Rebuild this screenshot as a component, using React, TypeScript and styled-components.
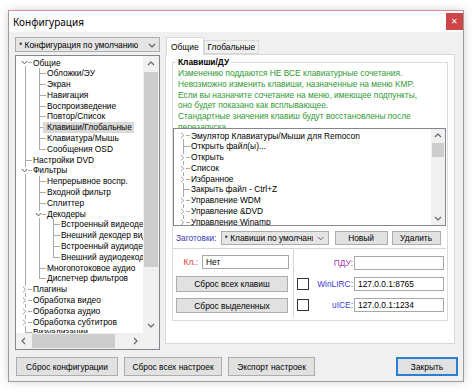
import React from 'react';
import styled, { createGlobalStyle } from 'styled-components';

type Chevron = 'open' | 'closed';

interface TreeItem {
  label: string;
  // one char per indent cell: ' ' empty, '|' pipe, 'T' tee, 'L' last, 'F' first root
  guides: string;
  chevron?: Chevron;
  selected?: boolean;
}

const LINE = '#ababab';
const ROW = 10.8;

const settingsTree: TreeItem[] = [
  { label: 'Общие', guides: 'F', chevron: 'open' },
  { label: 'Обложки/ЭУ', guides: '|T' },
  { label: 'Экран', guides: '|T' },
  { label: 'Навигация', guides: '|T' },
  { label: 'Воспроизведение', guides: '|T' },
  { label: 'Повтор/Список', guides: '|T' },
  { label: 'Клавиши/Глобальные', guides: '|T', selected: true },
  { label: 'Клавиатура/Мышь', guides: '|T' },
  { label: 'Сообщения OSD', guides: '|L' },
  { label: 'Настройки DVD', guides: 'T' },
  { label: 'Фильтры', guides: 'T', chevron: 'open' },
  { label: 'Непрерывное воспр.', guides: '|T' },
  { label: 'Входной фильтр', guides: '|T' },
  { label: 'Сплиттер', guides: '|T' },
  { label: 'Декодеры', guides: '|T', chevron: 'open' },
  { label: 'Встроенный видеодекодер', guides: '||T' },
  { label: 'Внешний декодер видео', guides: '||T' },
  { label: 'Встроенный аудиодекодер', guides: '||T' },
  { label: 'Внешний аудиодекодер', guides: '||L' },
  { label: 'Многопотоковое аудио', guides: '|T' },
  { label: 'Диспетчер фильтров', guides: '|L' },
  { label: 'Плагины', guides: 'T', chevron: 'closed' },
  { label: 'Обработка видео', guides: 'T', chevron: 'closed' },
  { label: 'Обработка аудио', guides: 'T', chevron: 'closed' },
  { label: 'Обработка субтитров', guides: 'T', chevron: 'closed' },
  { label: 'Визуализации', guides: 'T' },
];

const hotkeys: TreeItem[] = [
  { label: 'Эмулятор Клавиатуры/Мыши для Remocon', guides: 'F', chevron: 'closed' },
  { label: 'Открыть файл(ы)...', guides: 'T' },
  { label: 'Открыть', guides: 'T', chevron: 'closed' },
  { label: 'Список', guides: 'T', chevron: 'closed' },
  { label: 'Избранное', guides: 'T', chevron: 'closed' },
  { label: 'Закрыть файл - Ctrl+Z', guides: 'T' },
  { label: 'Управление WDM', guides: 'T', chevron: 'closed' },
  { label: 'Управление &DVD', guides: 'T', chevron: 'closed' },
  { label: 'Управление Winamp', guides: 'T', chevron: 'closed' },
];

const notice = [
  'Изменению поддаются НЕ ВСЕ клавиатурные сочетания.',
  'Невозможно изменить клавиши, назначенные на меню KMP.',
  'Если вы назначите сочетание на меню, имеющее подпункты,',
  'оно будет показано как всплывающее.',
  'Стандартные значения клавиш будут восстановлены после',
  'перезапуска.',
];

const guideBg = (g: string) => {
  const v = (y: string, h: string) => `linear-gradient(${LINE}, ${LINE}) 7px ${y} / 1px ${h} no-repeat`;
  const hz = `linear-gradient(${LINE}, ${LINE}) 7px 50% / 7px 1px no-repeat`;
  switch (g) {
    case '|':
      return v('0', '100%');
    case 'T':
      return `${hz}, ${v('0', '100%')}`;
    case 'L':
      return `${hz}, ${v('0', '50%')}`;
    case 'F':
      return `${hz}, ${v('100%', '50%')}`;
    default:
      return 'none';
  }
};

const Arrow: React.FC<{ dir: 'up' | 'down' | 'left' | 'right' }> = ({ dir }) => {
  const pts = {
    up: '1,5 4,2 7,5',
    down: '1,3 4,6 7,3',
    left: '5,1 2,4 5,7',
    right: '3,1 6,4 3,7',
  }[dir];
  return (
    <svg width="8" height="8" viewBox="0 0 8 8">
      <polyline points={pts} fill="none" stroke="#606060" strokeWidth="1.1" />
    </svg>
  );
};

const TreeRows: React.FC<{ items: TreeItem[] }> = ({ items }) => (
  <>
    {items.map((item) => (
      <TreeRow key={item.label}>
        {item.guides.split('').map((g, i) => (
          <GuideCell key={i} $guide={g}>
            {item.chevron && i === item.guides.length - 1 && (
              <ChevronIcon width="7" height="7" viewBox="0 0 7 7">
                <polyline
                  points={item.chevron === 'open' ? '0.8,2 3.5,4.8 6.2,2' : '2,0.8 4.8,3.5 2,6.2'}
                  fill="none"
                  stroke={item.chevron === 'open' ? '#505050' : '#9a9a9a'}
                  strokeWidth="1"
                />
              </ChevronIcon>
            )}
          </GuideCell>
        ))}
        <TreeLabel $selected={item.selected}>{item.label}</TreeLabel>
      </TreeRow>
    ))}
  </>
);

const VScrollbar: React.FC<{ size: number; thumb: number }> = ({ size, thumb }) => (
  <VTrack>
    <ArrowBox $size={size}>
      <Arrow dir="up" />
    </ArrowBox>
    <VThumb $height={thumb} />
    <Spacer />
    <ArrowBox $size={size}>
      <Arrow dir="down" />
    </ArrowBox>
  </VTrack>
);

const App: React.FC = () => (
  <>
    <GlobalStyle />
    <Page>
      <Window>
        <TitleBar>
          <Title>Конфигурация</Title>
          <CloseButton>✕</CloseButton>
        </TitleBar>
        <Body>
          <Main>
            <LeftColumn>
              <Combo $width={145}>
                <ComboText>* Конфигурация по умолчанию</ComboText>
                <Arrow dir="down" />
              </Combo>
              <Tree>
                <TreeContent>
                  <TreeRows items={settingsTree} />
                </TreeContent>
                <VScrollbar size={16} thumb={195} />
                <HTrack>
                  <ArrowBox $size={16}>
                    <Arrow dir="left" />
                  </ArrowBox>
                  <HThumb $width={83} />
                  <Spacer />
                  <ArrowBox $size={16}>
                    <Arrow dir="right" />
                  </ArrowBox>
                </HTrack>
                <Corner />
              </Tree>
            </LeftColumn>
            <RightColumn>
              <Tabs>
                <Tab $active>Общие</Tab>
                <Tab>Глобальные</Tab>
              </Tabs>
              <Panel>
                <Group>
                  <Legend>Клавиши/ДУ</Legend>
                  <Notice>
                    {notice.map((line) => (
                      <div key={line}>{line}</div>
                    ))}
                  </Notice>
                  <HotkeyList>
                    <TreeContent>
                      <TreeRows items={hotkeys} />
                    </TreeContent>
                    <VScrollbar size={14} thumb={14} />
                  </HotkeyList>
                  <PresetRow>
                    <FieldLabel $color="#3a3ab4">Заготовки:</FieldLabel>
                    <Combo $width={108}>
                      <ComboText>* Клавиши по умолчанию</ComboText>
                      <Arrow dir="down" />
                    </Combo>
                    <Button $width={53} $height={14}>
                      Новый
                    </Button>
                    <Button $width={49} $height={14}>
                      Удалить
                    </Button>
                  </PresetRow>
                  <Separator />
                  <KeyArea>
                    <KeyPane>
                      <KeyRow>
                        <KeyLabel>Кл.:</KeyLabel>
                        <TextBox $width={87}>Нет</TextBox>
                      </KeyRow>
                      <Button $width={112} $height={16}>
                        Сброс всех клавиш
                      </Button>
                      <Button $width={112} $height={15}>
                        Сброс выделенных
                      </Button>
                    </KeyPane>
                    <Divider />
                    <RemotePane>
                      <RemoteRow>
                        <CheckSlot />
                        <RemoteLabel $color="#a23cb0">ПДУ:</RemoteLabel>
                        <TextBox $width={90} />
                      </RemoteRow>
                      <RemoteRow>
                        <CheckSlot>
                          <CheckBox />
                        </CheckSlot>
                        <RemoteLabel $color="#3d3dd6">WinLIRC:</RemoteLabel>
                        <TextBox $width={90}>127.0.0.1:8765</TextBox>
                      </RemoteRow>
                      <RemoteRow>
                        <CheckSlot>
                          <CheckBox />
                        </CheckSlot>
                        <RemoteLabel $color="#3d3dd6">uICE:</RemoteLabel>
                        <TextBox $width={90}>127.0.0.1:1234</TextBox>
                      </RemoteRow>
                    </RemotePane>
                  </KeyArea>
                </Group>
              </Panel>
            </RightColumn>
          </Main>
          <Footer>
            <Button $width={102} $height={19}>
              Сброс конфигурации
            </Button>
            <Button $width={98} $height={19}>
              Сброс всех настроек
            </Button>
            <Button $width={87} $height={19}>
              Экспорт настроек
            </Button>
            <Button $width={62} $height={19} $primary>
              Закрыть
            </Button>
          </Footer>
        </Body>
      </Window>
    </Page>
  </>
);

export default App;

const GlobalStyle = createGlobalStyle`
  * {
    box-sizing: border-box;
  }
  html,
  body {
    margin: 0;
    padding: 0;
    background: #ffffff;
  }
  body {
    font-family: 'Liberation Sans', Arial, sans-serif;
    font-size: 8.4px;
    color: #000;
  }
`;
const Page = styled.div`
  width: 474px;
  height: 392px;
  padding: 10px 0 0 8px;
`;
const Window = styled.div`
  display: flex;
  flex-direction: column;
  width: 456px;
  height: 372px;
  border: 1px solid #9c9c9c;
  border-top-color: #d98b98;
  background: #f0f0f0;
  box-shadow: 0 0 9px rgba(0, 0, 0, 0.18);
`;
const TitleBar = styled.div`
  display: flex;
  align-items: flex-start;
  justify-content: space-between;
  height: 21px;
  padding-left: 4px;
  background: #ffffff;
`;
const Title = styled.span`
  font-family: 'Noto Sans', 'Liberation Sans', sans-serif;
  font-size: 10px;
  line-height: 23px;
`;
const CloseButton = styled.div`
  display: flex;
  align-items: center;
  justify-content: center;
  width: 17px;
  height: 17px;
  margin-top: 2px;
  font-size: 8px;
  color: #fff;
  background: #cf4646;
`;
const Body = styled.div`
  display: flex;
  flex-direction: column;
  gap: 7px;
  flex: 1;
  padding: 5px 5px 5px 6px;
`;
const Main = styled.div`
  display: flex;
  gap: 5px;
  height: 313px;
`;
const LeftColumn = styled.div`
  display: flex;
  flex-direction: column;
  gap: 3px;
  width: 145px;
`;
const Combo = styled.div<{ $width: number }>`
  display: flex;
  align-items: center;
  justify-content: space-between;
  gap: 4px;
  width: ${({ $width }) => $width}px;
  height: 15px;
  padding: 0 3px;
  border: 1px solid #acacac;
  background: #e5e5e5;
  flex-shrink: 0;
`;
const ComboText = styled.span`
  overflow: hidden;
  white-space: nowrap;
`;
const Tree = styled.div`
  display: grid;
  grid-template-columns: 1fr 16px;
  grid-template-rows: 1fr 16px;
  flex: 1;
  min-height: 0;
  border: 1px solid #828790;
  background: #fff;
`;
const TreeContent = styled.div`
  overflow: hidden;
  padding: 1.5px 0 0 2px;
  min-width: 0;
  min-height: 0;
`;
const TreeRow = styled.div`
  display: flex;
  align-items: center;
  height: ${ROW}px;
  white-space: nowrap;
`;
const GuideCell = styled.span<{ $guide: string }>`
  display: flex;
  align-items: center;
  justify-content: center;
  flex-shrink: 0;
  width: 14px;
  height: 100%;
  padding-right: 1px;
  background: ${({ $guide }) => guideBg($guide)};
`;
const ChevronIcon = styled.svg`
  background: #fff;
`;
const TreeLabel = styled.span<{ $selected?: boolean }>`
  line-height: ${ROW}px;
  padding: ${({ $selected }) => ($selected ? '0 2px 0 4px' : '0 1px')};
  margin-left: ${({ $selected }) => ($selected ? '-3px' : '0')};
  background: ${({ $selected }) => ($selected ? '#d9d9d9' : 'transparent')};
`;
const VTrack = styled.div`
  display: flex;
  flex-direction: column;
  background: #f0f0f0;
`;
const HTrack = styled.div`
  display: flex;
  background: #f0f0f0;
`;
const ArrowBox = styled.div<{ $size: number }>`
  display: flex;
  align-items: center;
  justify-content: center;
  flex-shrink: 0;
  width: ${({ $size }) => $size}px;
  height: ${({ $size }) => $size}px;
`;
const VThumb = styled.div<{ $height: number }>`
  height: ${({ $height }) => $height}px;
  margin: 0 1px;
  background: #cdcdcd;
`;
const HThumb = styled.div<{ $width: number }>`
  width: ${({ $width }) => $width}px;
  margin: 1px 0;
  background: #cdcdcd;
`;
const Spacer = styled.div`
  flex: 1;
`;
const Corner = styled.div`
  background: #f0f0f0;
`;
const RightColumn = styled.div`
  display: flex;
  flex-direction: column;
  width: 290px;
  height: 307px;
`;
const Tabs = styled.div`
  display: flex;
  align-items: flex-end;
  height: 17px;
  padding-left: 1px;
`;
const Tab = styled.div<{ $active?: boolean }>`
  position: relative;
  display: flex;
  align-items: center;
  height: ${({ $active }) => ($active ? '18px' : '14px')};
  margin-bottom: ${({ $active }) => ($active ? '-1px' : '0')};
  padding: 0 ${({ $active }) => ($active ? '4px' : '3px')};
  border: 1px solid #d9d9d9;
  border-bottom: ${({ $active }) => ($active ? 'none' : '1px solid #d9d9d9')};
  background: ${({ $active }) => ($active ? '#fff' : '#f0f0f0')};
  z-index: ${({ $active }) => ($active ? 1 : 0)};
`;
const Panel = styled.div`
  flex: 1;
  padding: 2px 6px 0 6px;
  border: 1px solid #d9d9d9;
  background: #fff;
`;
const Group = styled.fieldset`
  display: flex;
  flex-direction: column;
  height: 264px;
  margin: 0;
  padding: 0 1px 0 0;
  border: 1px solid #dcdcdc;
`;
const Legend = styled.legend`
  margin-left: 3px;
  padding: 0 2px;
  font-weight: bold;
  line-height: 11px;
`;
const Notice = styled.div`
  height: 60px;
  overflow: hidden;
  padding-left: 5px;
  line-height: ${ROW}px;
  white-space: nowrap;
  color: #2f9a33;
  flex-shrink: 0;
`;
const HotkeyList = styled.div`
  display: grid;
  grid-template-columns: 1fr 14px;
  height: 98px;
  border: 1px solid #828790;
  background: #fff;
  flex-shrink: 0;
`;
const PresetRow = styled.div`
  display: flex;
  align-items: center;
  gap: 4px;
  height: 14px;
  margin-top: 5px;
  padding-left: 3px;
  & > ${Combo} {
    height: 14px;
    margin-right: 2px;
  }
`;
const FieldLabel = styled.span<{ $color: string }>`
  color: ${({ $color }) => $color};
  white-space: nowrap;
`;
const Button = styled.div<{ $width: number; $height: number; $primary?: boolean }>`
  display: flex;
  align-items: center;
  justify-content: center;
  flex-shrink: 0;
  width: ${({ $width }) => $width}px;
  height: ${({ $height }) => $height}px;
  border: 1px solid ${({ $primary }) => ($primary ? '#2a7fd4' : '#adadad')};
  box-shadow: ${({ $primary }) => ($primary ? 'inset 0 0 0 1px #2a7fd4' : 'none')};
  background: #e1e1e1;
  white-space: nowrap;
`;
const Separator = styled.div`
  height: 1px;
  margin-top: 3px;
  background: #d5d5d5;
`;
const KeyArea = styled.div`
  display: flex;
  height: 68px;
`;
const KeyPane = styled.div`
  display: flex;
  flex-direction: column;
  align-items: flex-start;
  gap: 6px;
  flex: 0 0 120px;
  padding: 6px 0 0 3px;
`;
const KeyRow = styled.div`
  display: grid;
  grid-template-columns: 26px 87px;
  align-items: center;
  gap: 0;
  width: 113px;
  margin-bottom: 1px;
`;
const KeyLabel = styled.span`
  padding-right: 4px;
  text-align: right;
  color: #e03a3a;
`;
const TextBox = styled.div<{ $width: number }>`
  display: flex;
  align-items: center;
  flex: 0 0 ${({ $width }) => $width}px;
  width: ${({ $width }) => $width}px;
  height: 14px;
  padding: 0 3px;
  border: 1px solid #a8a8a8;
  background: #fff;
  white-space: nowrap;
`;
const Divider = styled.div`
  flex: 0 0 1px;
  background: #d5d5d5;
`;
const RemotePane = styled.div`
  display: flex;
  flex-direction: column;
  gap: 7px;
  flex: 1;
  padding: 7px 2px 0 3px;
`;
const RemoteRow = styled.div`
  display: flex;
  align-items: center;
  height: 14px;
`;
const CheckSlot = styled.div`
  width: 12px;
  height: 12px;
  flex-shrink: 0;
`;
const CheckBox = styled.div`
  width: 12px;
  height: 12px;
  border: 1px solid #333;
  background: #fff;
`;
const RemoteLabel = styled.span<{ $color: string }>`
  flex: 1;
  padding-right: 1px;
  text-align: right;
  color: ${({ $color }) => $color};
`;
const Footer = styled.div`
  display: flex;
  gap: 6px;
  padding-left: 1px;
  & > :last-child {
    margin-left: auto;
  }
`;
